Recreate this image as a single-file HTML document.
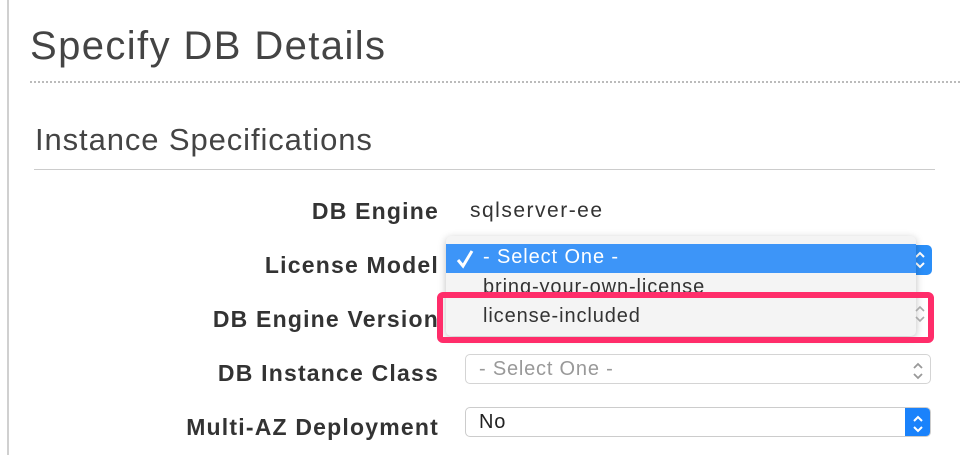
<!DOCTYPE html>
<html><head><style>
body{margin:0;width:960px;height:455px;background:#fff;position:relative;overflow:hidden;font-family:"Liberation Sans",Arial,sans-serif;color:#333}
.a{position:absolute}
.lbl{position:absolute;right:521px;font-weight:bold;font-size:23px;letter-spacing:1.2px;color:#333;white-space:nowrap}
.sel{position:absolute;left:465px;width:466px;height:30px;border:1px solid #d4d4d4;border-radius:5px;box-sizing:border-box;background:#fff;font-size:20px;letter-spacing:0.8px}
.arr{position:absolute;right:6px;top:6px}
.it{position:absolute;left:37px;font-size:20px;letter-spacing:0.9px;color:#333;white-space:nowrap}
</style></head><body>
<div class="a" style="left:7px;top:0;width:2px;height:455px;background:#d0d0d0"></div>
<div class="a" style="left:30px;top:24px;font-size:40px;letter-spacing:1.4px;color:#444">Specify DB Details</div>
<div class="a" style="left:30px;top:81px;width:930px;border-top:2px dotted #bbb"></div>
<div class="a" style="left:35px;top:122px;font-size:31px;letter-spacing:0.9px;color:#444">Instance Specifications</div>
<div class="a" style="left:34px;top:169px;width:901px;height:1px;background:#ccc"></div>

<div class="lbl" style="top:198px">DB Engine</div>
<div class="a" style="left:470px;top:199px;font-size:21px;letter-spacing:1.5px">sqlserver-ee</div>
<div class="lbl" style="top:252px">License Model</div>
<div class="lbl" style="top:306px">DB Engine Version</div>
<div class="lbl" style="top:360px">DB Instance Class</div>
<div class="lbl" style="top:414px">Multi-AZ Deployment</div>

<div class="a" style="left:900px;top:245px;width:32px;height:30px;background:#2a8ef8;border-radius:0 5px 5px 0"></div>
<svg class="a" style="left:914px;top:250px" width="12" height="20"><path d="M2 7L6 3L10 7M2 13L6 17L10 13" stroke="#fff" stroke-width="2" fill="none"/></svg>

<div class="sel" style="top:354px"><span class="a" style="left:13px;top:3px;color:#999">- Select One -</span>
<svg class="arr" width="12" height="20"><path d="M2 7L6 3L10 7M2 13L6 17L10 13" stroke="#999" stroke-width="1.8" fill="none"/></svg></div>
<div class="sel" style="top:407px;border-color:#ccc;overflow:hidden"><span class="a" style="left:13px;top:3px;color:#222">No</span>
<div class="a" style="right:0;top:0;width:25px;height:30px;background:#1a82fb"></div>
<svg class="arr" style="right:6px" width="12" height="20"><path d="M2 7L6 3L10 7M2 13L6 17L10 13" stroke="#fff" stroke-width="2" fill="none"/></svg></div>

<div class="a" style="left:446px;top:236px;width:470px;height:100px;background:#f4f4f4;border-radius:5px;box-shadow:0 2px 8px rgba(0,0,0,.25);overflow:hidden">
<div class="a" style="left:0;top:8px;width:470px;height:29px;background:#3d95f8"></div>
<svg class="a" style="left:9px;top:13px" width="20" height="20"><path d="M3 11L8 17L17 2" stroke="#fff" stroke-width="3" fill="none"/></svg>
<div class="it" style="top:10px;color:#fff">- Select One -</div>
<div class="it" style="top:40px">bring-your-own-license</div>
<div class="it" style="top:69px">license-included</div>
</div>
<svg class="a" style="left:914px;top:304px" width="12" height="20"><path d="M2 7L6 3L10 7M2 13L6 17L10 13" stroke="#aaa" stroke-width="1.6" fill="none"/></svg>
<div class="a" style="left:437px;top:292px;width:497px;height:51px;box-sizing:border-box;border:6px solid #ff2d6a;border-radius:6px"></div>
</body></html>
